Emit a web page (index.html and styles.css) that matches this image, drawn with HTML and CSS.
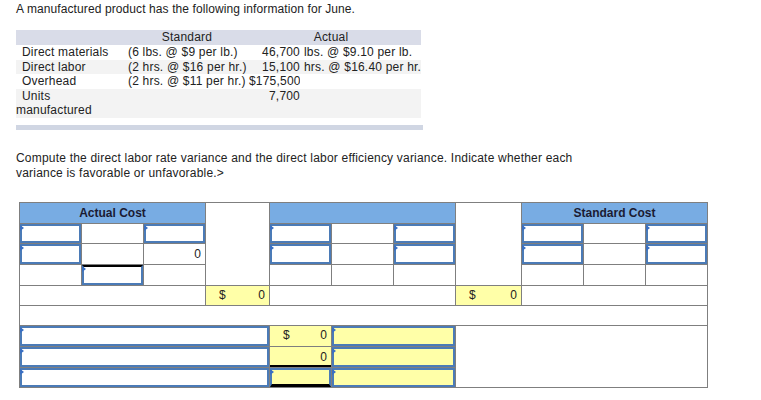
FILE: index.html
```html
<!DOCTYPE html>
<html>
<head>
<meta charset="utf-8">
<link rel="stylesheet" href="styles.css">
</head>
<body>
<div class="page">
  <p class="intro">A manufactured product has the following information for June.</p>

  <div class="info">
    <div class="ih"></div>
    <div class="ih">Standard</div>
    <div class="ih ih-act">Actual</div>

    <div class="ic lab">Direct materials</div>
    <div class="ic std">(6 lbs. @ $9 per lb.)</div>
    <div class="ic num">46,700</div>
    <div class="ic unit">lbs. @ $9.10 per lb.</div>

    <div class="ic lab alt">Direct labor</div>
    <div class="ic std alt">(2 hrs. @ $16 per hr.)</div>
    <div class="ic num alt">15,100</div>
    <div class="ic unit alt">hrs. @ $16.40 per hr.</div>

    <div class="ic lab">Overhead</div>
    <div class="ic std">(2 hrs. @ $11 per hr.)</div>
    <div class="ic num">$175,500</div>
    <div class="ic unit"></div>

    <div class="ic lab alt">Units<br>manufactured</div>
    <div class="ic std alt"></div>
    <div class="ic num alt">7,700</div>
    <div class="ic unit alt"></div>
  </div>
  <div class="info-bar"></div>

  <p class="question">Compute the direct labor rate variance and the direct labor efficiency variance. Indicate whether each<br>variance is favorable or unfavorable.&gt;</p>

  <div class="sheet">
    <!-- row 1 -->
    <div class="c hd r1 k1s3">Actual Cost</div>
    <div class="c r1to4 k4"></div>
    <div class="c hd r1 k5s3"></div>
    <div class="c r1to4 k8"></div>
    <div class="c hd r1 k9s3">Standard Cost</div>

    <!-- row 2 -->
    <div class="c r2 k1"><div class="inp"></div></div>
    <div class="c r2 k2"></div>
    <div class="c r2 k3"><div class="inp"></div></div>
    <div class="c r2 k5"><div class="inp"></div></div>
    <div class="c r2 k6"></div>
    <div class="c r2 k7"><div class="inp"></div></div>
    <div class="c r2 k9"><div class="inp"></div></div>
    <div class="c r2 k10"></div>
    <div class="c r2 k11"><div class="inp"></div></div>

    <!-- row 3 -->
    <div class="c r3 k1"><div class="inp"></div></div>
    <div class="c r3 k2"></div>
    <div class="c r3 k3 val">0</div>
    <div class="c r3 k5"><div class="inp"></div></div>
    <div class="c r3 k6"></div>
    <div class="c r3 k7"><div class="inp"></div></div>
    <div class="c r3 k9"><div class="inp"></div></div>
    <div class="c r3 k10"></div>
    <div class="c r3 k11"><div class="inp"></div></div>

    <!-- row 4 -->
    <div class="c r4 k1"></div>
    <div class="c r4 k2 topline"><div class="inp"></div></div>
    <div class="c r4 k3"></div>
    <div class="c r4 k5"></div>
    <div class="c r4 k6"></div>
    <div class="c r4 k7"></div>
    <div class="c r4 k9"></div>
    <div class="c r4 k10"></div>
    <div class="c r4 k11"></div>

    <!-- row 5 -->
    <div class="c r5 k1s3"></div>
    <div class="c r5 k4 yel money"><span>$</span><span>0</span></div>
    <div class="c r5 k5s3"></div>
    <div class="c r5 k8 yel money"><span>$</span><span>0</span></div>
    <div class="c r5 k9s3"></div>

    <!-- row 6 -->
    <div class="c r6 kall"></div>

    <!-- rows 7-9 -->
    <div class="c r7 k1s4"><div class="inp"></div></div>
    <div class="c r7 k5 yel money"><span>$</span><span>0</span></div>
    <div class="c r7 k6s2"><div class="inp yin"></div></div>
    <div class="c r7to10 k8s4"></div>

    <div class="c r8 k1s4"><div class="inp"></div></div>
    <div class="c r8 k5 yel val botline">0</div>
    <div class="c r8 k6s2"><div class="inp yin"></div></div>

    <div class="c r9 k1s4"><div class="inp"></div></div>
    <div class="c r9 k5 botbar"><div class="inp yin"></div></div>
    <div class="c r9 k6s2"><div class="inp yin"></div></div>
  </div>
</div>
</body>
</html>
```

FILE: styles.css
```css
html, body {
  margin: 0;
  padding: 0;
  background: #ffffff;
}

.page {
  padding: 2px 0 0 16px;
  font-family: "Liberation Sans", Arial, sans-serif;
  font-size: 12px;
  letter-spacing: 0.2px;
  color: #222222;
}

.intro {
  margin: 0;
  font-size: 12px;
  letter-spacing: 0.1px;
  line-height: 14px;
}

.info {
  margin-top: 14px;
  width: 405px;
  display: grid;
  grid-template-columns: 109px 124px 51px 121px;
  line-height: 14.5px;
}

.ih {
  background: #d9dce8;
  height: 15px;
  line-height: 15px;
  text-align: center;
}
.ih-act { grid-column: 3 / 5; padding-right: 8px; }

.ic {
  background: #ffffff;
  white-space: nowrap;
}
.ic.alt { background: #f3f3f3; }
.lab { text-indent: 6px; }
.std { padding-left: 3px; }
.num { text-align: right; }
.unit { padding-left: 4px; }

.info-bar {
  margin-top: 7px;
  width: 407px;
  height: 5px;
  background: #d0d6e3;
}

.question {
  margin: 21px 0 0 0;
  line-height: 15px;
}

.sheet {
  margin: 21px 0 0 3px;
  display: grid;
  grid-template-columns: 61px 61px 61px 63px 61px 61px 61px 65px 61px 61px 61px;
  grid-template-rows: 20px 19px 20px 20px 19px 19px 20px 20px 19px;
  gap: 1px;
  background: #7f7f7f;
  border: 1px solid #7f7f7f;
  width: max-content;
  letter-spacing: 0;
}

/* placement */
.r1 { grid-row: 1; }
.r2 { grid-row: 2; }
.r3 { grid-row: 3; }
.r4 { grid-row: 4; }
.r5 { grid-row: 5; }
.r6 { grid-row: 6; }
.r7 { grid-row: 7; }
.r8 { grid-row: 8; }
.r9 { grid-row: 9; }
.r1to4 { grid-row: 1 / 5; }
.r7to10 { grid-row: 7 / 10; }

.k1 { grid-column: 1; }
.k2 { grid-column: 2; }
.k3 { grid-column: 3; }
.k4 { grid-column: 4; }
.k5 { grid-column: 5; }
.k6 { grid-column: 6; }
.k7 { grid-column: 7; }
.k8 { grid-column: 8; }
.k9 { grid-column: 9; }
.k10 { grid-column: 10; }
.k11 { grid-column: 11; }
.k1s3 { grid-column: 1 / 4; }
.k5s3 { grid-column: 5 / 8; }
.k9s3 { grid-column: 9 / 12; }
.k1s4 { grid-column: 1 / 5; }
.k6s2 { grid-column: 6 / 8; }
.k8s4 { grid-column: 8 / 12; }
.kall { grid-column: 1 / 12; }

.c {
  background: #ffffff;
  position: relative;
  min-width: 0;
}

.hd {
  background: #78ace3;
  color: #1b1b33;
  font-weight: bold;
  text-align: center;
  line-height: 20px;
}

.yel { background: #ffffa8; }

.val {
  text-align: right;
  padding-right: 4px;
  line-height: 20px;
}

.money {
  display: flex;
  justify-content: space-between;
  padding: 0 4px 0 13px;
  line-height: 19px;
}

.inp {
  box-sizing: border-box;
  height: 100%;
  border: 2px solid #4b7bb7;
  background: #ffffff;
  position: relative;
}
.inp.yin { background: #ffffa8; }
.inp::before {
  content: "";
  position: absolute;
  left: -2px;
  top: -1px;
  border-left: 4px solid #3a6fc2;
  border-top: 3px solid transparent;
  border-bottom: 3px solid transparent;
}

.topline { box-shadow: inset 0 2px 0 #000000; }
.topline .inp { border-top-color: #000000; }

.botline { box-shadow: inset 0 -2px 0 #000000; }

.botbar .inp { border-bottom: 3px solid #000000; }
```
